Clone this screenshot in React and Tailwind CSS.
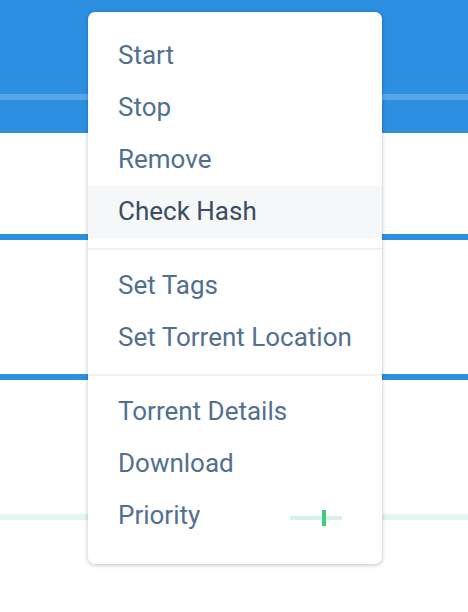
import React from 'react';

const groups = [
  ['Start', 'Stop', 'Remove', 'Check Hash'],
  ['Set Tags', 'Set Torrent Location'],
  ['Torrent Details', 'Download', 'Priority'],
];

function MenuItem({ label, active }) {
  return (
    <li
      className={`flex h-[52px] items-center justify-between whitespace-nowrap pb-[2px] pl-[30px] pr-[16px] text-[26px] leading-[50px] ${
        active ? 'bg-[#f6f7f9] text-[#3b4b61]' : 'text-[#51708f]'
      }`}
    >
      <span>{label}</span>
      {label === 'Priority' && (
        <span className="relative mr-[24px] mt-[6px] flex h-[16px] w-[52px] items-center">
          <span className="h-[4px] w-full bg-[#d6f4e6]"></span>
          <span className="absolute left-[32px] top-0 h-[16px] w-[4px] bg-[#3ecc81]"></span>
        </span>
      )}
    </li>
  );
}

export default function App() {
  return (
    <div
      className="relative h-[612px] w-[468px] overflow-hidden bg-white"
      style={{ fontFamily: 'Roboto, "Noto Sans", sans-serif' }}
    >
      {/* background table behind the menu */}
      <div className="h-[133px] bg-[#2d8fe0] pt-[94px]">
        <div className="h-[6px] bg-[#58a5ea]"></div>
      </div>
      <div className="h-[101px]"></div>
      <div className="h-[6px] bg-[#2d8fe0]"></div>
      <div className="h-[134px]"></div>
      <div className="h-[6px] bg-[#2d8fe0]"></div>
      <div className="h-[134px]"></div>
      <div className="h-[6px] bg-[#e3f7ed]"></div>

      {/* context menu */}
      <div className="absolute left-[88px] top-[12px] w-[294px] rounded-[7px] bg-white pb-[22px] pt-[18px] shadow-[0_1px_4px_rgba(0,0,0,0.25)]">
        {groups.map((items, gi) => (
          <div key={gi}>
            {gi > 0 && <div className="my-[10px] h-[2px] bg-[#f0f1f2]"></div>}
            <ul>
              {items.map((label) => (
                <MenuItem key={label} label={label} active={label === 'Check Hash'} />
              ))}
            </ul>
          </div>
        ))}
      </div>
    </div>
  );
}
